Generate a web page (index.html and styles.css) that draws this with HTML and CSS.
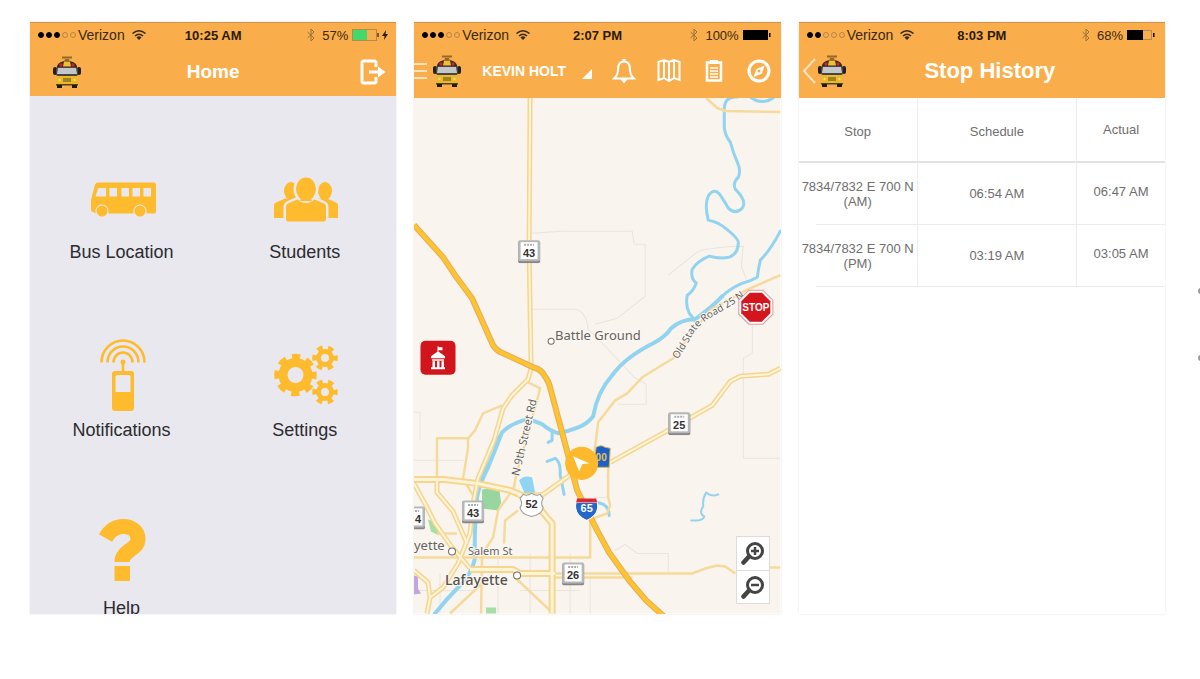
FILE: index.html
```html
<!DOCTYPE html>
<html lang="en">
<head>
<meta charset="utf-8">
<meta name="viewport" content="width=device-width, initial-scale=1">
<title>School Bus Tracker</title>
<link rel="stylesheet" href="styles.css">
</head>
<body>
<svg class="sprite" aria-hidden="true">
  <symbol id="bus-logo" viewBox="0 0 30 34">
    <path d="M10 1.500h10v2H10zM13 4h4l1 3h-6z" fill="#96672a"/>
    <path d="M5 11Q7 6 15 6t10 5v3H5z" fill="#3b2c22"/>
    <path d="M12 6.500h6l1 5h-8z" fill="#efc02f"/>
    <circle cx="9" cy="10" r="1.700" fill="#d3202a"/><circle cx="21" cy="10" r="1.700" fill="#d3202a"/>
    <rect x="1" y="12" width="4" height="8" rx="2" fill="#25201d"/><rect x="25" y="12" width="4" height="8" rx="2" fill="#25201d"/>
    <rect x="4" y="12" width="22" height="9" rx="2" fill="#4a4540"/>
    <path d="M6 13h18l1 6H5z" fill="#c3c7cc"/>
    <path d="M5 21h20l1 9H4z" fill="#e9b92b"/>
    <path d="M11 24h8M11 26h8" stroke="#5c4719" stroke-width="1"/>
    <circle cx="7.500" cy="25" r="1.200" fill="#f6da6c"/><circle cx="22.500" cy="25" r="1.200" fill="#f6da6c"/>
    <path d="M4 29h22v1.500H4z" fill="#54421e"/>
    <path d="M5 30h5v3H5zM20 30h5v3h-5z" fill="#1e1a18"/>
  </symbol>
  <symbol id="wifi" viewBox="0 0 16 12">
    <path d="M1.500 4.500Q8-1 14.500 4.500M4 7Q8 3.500 12 7" fill="none" stroke="#3a2812" stroke-width="1.600"/>
    <path d="M5.500 8.500Q8 6 10.500 8.500L8 11z" fill="#3a2812"/>
  </symbol>
  <symbol id="bluetooth" viewBox="0 0 10 14">
    <path d="M1.500 4 8 10 5 13V1l3 3-6.500 6" fill="none" stroke="#97703e" stroke-width="1"/>
  </symbol>
  <symbol id="route-sign" viewBox="0 0 24 24">
    <rect x="1" y="2" width="22" height="22" rx="2" fill="#858585"/>
    <rect x="1" y="1" width="22" height="21" rx="2" fill="#b5b7b8"/>
    <rect x="3.500" y="3" width="17" height="17" fill="#fff"/>
    <path d="M7 5.500h10" stroke="#aaa" stroke-width="2" stroke-dasharray="2 1"/>
  </symbol>
</svg>

<main class="screens">
  <section class="phone home" aria-label="Home">
    <header class="bar">
      <div class="status">
        <span class="carrier"><span class="signal"><i class="on"></i><i class="on"></i><i class="on"></i><i></i><i></i></span>Verizon<svg class="wifi"><use href="#wifi"/></svg></span>
        <b>10:25 AM</b>
        <span class="power"><svg class="bt"><use href="#bluetooth"/></svg>57%<svg class="battery" viewBox="0 0 30 12"><rect x=".5" y=".5" width="24" height="11" fill="none" stroke="#b58a4d"/><rect x="1" y="1" width="14" height="10" fill="#44d86b"/><path d="M26 4v4" stroke="#7a5a2c" stroke-width="2"/></svg><svg class="bolt" viewBox="0 0 6 12"><path d="M4 1 0 7h2.500L2 11l4-6H3.500z" fill="#2a1b08"/></svg></span>
      </div>
      <div class="title-row">
        <svg class="logo"><use href="#bus-logo"/></svg>
        <h1>Home</h1>
        <button class="icon-btn exit" aria-label="Log out"><svg viewBox="0 0 26 26"><path d="M16 8V4a2 2 0 0 0-2-2H4a2 2 0 0 0-2 2v18a2 2 0 0 0 2 2h10a2 2 0 0 0 2-2v-4" fill="none" stroke="#fff" stroke-width="3"/><path d="M9 11.500h9V7.500l7.500 5.500-7.500 5.500v-4H9z" fill="#fff"/></svg></button>
      </div>
    </header>
    <nav class="tiles">
      <a class="tile" href="#bus">
        <svg viewBox="79 156 84 84"><path fill="#fdbb2d" fill-rule="evenodd" d="M97 182.500h56q2 0 2 2v27q0 2-2 2h-7.500a6.500 6.500 0 0 0-13 0h-25a6.500 6.500 0 0 0-13 0l-2-1.500q-2.500 0-2.500-2v-10l4-15.500q1-2 3-2zm0 6-2.500 8h10.500v-8.500h-6q-1.500 0-2 .5zm11.500-.5v8.500h7.500V188zm12 0v8.500h7.500V188zm11 0v8.500h7.500V188zm11 0v8.500h7.500V188z"/><circle cx="101" cy="211" r="5.500" fill="#fdbb2d" stroke="#e9e8ef" stroke-width="2" paint-order="stroke"/><circle cx="139" cy="211" r="5.500" fill="#fdbb2d" stroke="#e9e8ef" stroke-width="2" paint-order="stroke"/></svg>
        <span>Bus Location</span>
      </a>
      <a class="tile" href="#students">
        <svg viewBox="262 156 84 84"><g fill="#fdbb2d"><ellipse cx="290" cy="191" rx="7" ry="9"/><ellipse cx="324" cy="191" rx="7" ry="9"/><path d="M273 218v-13q0-2 2-2.500l9-4h11v19.500zM337 218v-13q0-2-2-2.500l-9-4h-11v19.500z"/></g><g fill="#fdbb2d" stroke="#e9e8ef" stroke-width="5" paint-order="stroke"><path d="M285 219v-12q0-3 3-4l12-5 1-4h8l1 4 12 5q3 1 3 4v12q0 2.500-2.500 2.500h-35q-2.500 0-2.500-2.500z"/><ellipse cx="305" cy="189" rx="10" ry="11.500"/></g><path d="M301 196h8l2 5h-12z" fill="#fdbb2d"/></svg>
        <span>Students</span>
      </a>
      <a class="tile" href="#notifications">
        <svg viewBox="79 334 84 84"><g fill="none" stroke="#fdbb2d" stroke-width="2.600"><path d="M100.500 362.500a21.500 22 0 0 1 43 0M106.500 362.500a15.500 16 0 0 1 31 0M112.500 362.500a9.500 10 0 0 1 19 0M122 362v12"/></g><circle cx="122" cy="362" r="2.500" fill="#fdbb2d"/><path d="M114 371h16q3 0 3 3v34q0 3-3 3h-16q-3 0-3-3v-34q0-3 3-3zm2 4q-1.500 0-1.500 1.500V392h15v-15.500q0-1.500-1.500-1.500z" fill="#fdbb2d" fill-rule="evenodd"/></svg>
        <span>Notifications</span>
      </a>
      <a class="tile" href="#settings">
        <svg viewBox="262 334 84 84"><g fill="none" stroke="#fdbb2d">
          <circle cx="294.500" cy="375" r="12.500" stroke-width="9"/><circle cx="294.500" cy="375" r="18.700" stroke-width="5" stroke-dasharray="8.344 6.344" stroke-dashoffset="4.172"/>
          <circle cx="324" cy="358" r="6.500" stroke-width="5"/><circle cx="324" cy="358" r="10.500" stroke-width="4.500" stroke-dasharray="5.498 5.498" stroke-dashoffset="2.749"/>
          <circle cx="324" cy="392" r="6.500" stroke-width="5"/><circle cx="324" cy="392" r="10.500" stroke-width="4.500" stroke-dasharray="5.498 5.498" stroke-dashoffset="2.749"/>
        </g></svg>
        <span>Settings</span>
      </a>
      <a class="tile" href="#help">
        <svg viewBox="79 512 84 84"><path d="M104.500 538Q111 526.500 122 526.500c9 0 15 5 15 12.500 0 11-16 11-16 23" fill="none" stroke="#fdbb2d" stroke-width="15"/><path d="M113.500 566h15.500v15h-15.500z" fill="#fdbb2d"/></svg>
        <span>Help</span>
      </a>
    </nav>
  </section>

  <section class="phone" aria-label="Map">
    <header class="bar tall">
      <div class="status">
        <span class="carrier"><span class="signal"><i class="on"></i><i class="on"></i><i class="on"></i><i></i><i></i></span>Verizon<svg class="wifi"><use href="#wifi"/></svg></span>
        <b>2:07 PM</b>
        <span class="power"><svg class="bt"><use href="#bluetooth"/></svg>100%<svg class="battery" viewBox="0 0 30 12"><path d="M0 1h25v10H0zM26 4h1.500v4H26z"/></svg></span>
      </div>
      <div class="title-row map-tools">
        <button class="menu" aria-label="Menu"><svg viewBox="0 0 13 18"><path d="M0 2h13M0 9h13M0 16h13" stroke="#fde3c2" stroke-width="2"/></svg></button>
        <svg class="logo"><use href="#bus-logo"/></svg>
        <label class="student"><select aria-label="Student"><option>KEVIN HOLT</option></select><svg viewBox="0 0 10 10"><path d="M10 0v10H0z" fill="#fff"/></svg></label>
        <div class="tools">
          <button class="icon-btn" aria-label="Alerts"><svg viewBox="0 0 24 26"><path d="M12 3.500c-5 0-6 4-6 8 0 5-1.500 7-4 9h20c-2.500-2-4-4-4-9 0-4-1-8-6-8z" fill="none" stroke="#fff" stroke-width="2"/><path d="M8.500 21h7L12 25.500zM10.500 1h3v3h-3z" fill="#fff"/></svg></button>
          <button class="icon-btn" aria-label="Map view"><svg viewBox="0 0 24 26"><path d="m1.500 4 5.500-2 5 2 5-2 5.500 2v18L17 20l-5 3-5-3-5.500 2zM7 2v18M12 4v19M17 2v18" fill="none" stroke="#fff" stroke-width="2"/></svg></button>
          <button class="icon-btn" aria-label="Stop history"><svg viewBox="0 0 24 26"><path d="M5 4.500h14v18H5z" fill="none" stroke="#fff" stroke-width="2.500"/><path d="M8 2h8v4H8z" fill="#fff"/><path d="M8 10h8M8 13h8M8 16h8M8 19h8" stroke="#fff" stroke-width="1.300"/></svg></button>
          <button class="icon-btn" aria-label="Compass"><svg viewBox="0 0 24 26"><circle cx="12" cy="13" r="10" fill="none" stroke="#fff" stroke-width="3"/><path d="m17.500 7.500-2.500 8-8.500 3.500 3-8z" fill="#fff"/><circle cx="12" cy="13" r="1.500" fill="#f9ae4b"/></svg></button>
        </div>
      </div>
    </header>
    <div class="map">
      <svg class="map-canvas" viewBox="414 98 366 515" preserveAspectRatio="xMidYMid slice" role="img" aria-label="Map of Lafayette">
        <rect x="414" y="98" width="366" height="515" fill="#f9f4ee"/>
        <g fill="none" stroke="#e8e4de">
          <path d="M532 233l30-2h70l2 13h11v52l-28 22-22 6M668 275l30-24q20-5 45-5l-2 20 5 13M532 309h42q12 1 14 20l20 20 26 28 12 7v20h-28M752 325v28l-9 5v100h37M414 412h6v28M743 450v8h37M615 550l10-6 12 9h31v20M595 497h13M414 460h50M414 590h60M498 553v60M530 553v60M570 553v60M440 573v40M520 590h60M590 573v40"/>
        </g>
        <path d="M482 489l17-2 2 15-3 8-16-2z" fill="#98d6a0"/><path d="M428 519l7 2 4 14-8-4zM486 607h10v6h-10z" fill="#a6dfa5"/><path d="M414 575l4 1v12l3 5-7 1z" fill="#c4a5dc"/>
        <path d="M519 480q5-6 13-3l3 15-10 2z" fill="#8fd4f1"/>
        <g fill="none" stroke="#92d4f0" stroke-linejoin="round" stroke-linecap="round">
          <path stroke-width="3" d="M737 97q-12-1-13 11v20q1 8 6 14 3 11 7 20 4 9 1 15-6 6-3 12 12 12 7 19-7 7-14 0-4-7-8-13-6-8-12 1-4 8 0 24 10 2 17 8 14 11 13 15 0 10-9 14-9 2-20-1-12 5-17 13-2 9 4 14-3 8-9 12-2 10 2 18l7 9M750 97q12 9 24 0M780 231q-10 19-20 29-2 9-3 17-7 4-15 6-13 6-20 13"/>
          <path stroke-width="4" d="M722 296q-9 10-27 23-14 0-24 9-6 9-18 15-28 14-41 32-15 17-19 41-6 8-15 11-10 4-20 6-9-3-16-9-9-5-19-4-13 4-21 12-9 23-14 35-9 18-11 30-3 35-2 61-3 15-16 28-12 12-24 27"/>
          <path stroke-width="3" d="M501 434l-10 14-11 34M552 430v10l-4 2M547 461l8-3q6 4 5 16l4 20M594 502q15 0 15 13"/>
          <path stroke-width="2" d="M718 494q-6 3-12-2-4 6-3 14-5 7 1 10-1 5-13 4"/>
        </g>
        <g fill="none" stroke="#f6da9b" stroke-width="2.500" stroke-linejoin="round">
          <path d="M706 98l11 10 8 3 55 1M780 275l-32 14-38 21-18 22-19 26-31 19-15 16-12 7-17 22-4 32M437 478v-40h31l7-8 8-17 19-8M468 438v10l-5 30 10 17M414 557h176V514M510 493l-12 17-5 27-11 17-1 59M518 510l-13 10-1 23M515 577l37 35M482 583l-32 30M528 382l12 6-3 12-21 75-3 17M608 467v30l2 8-3 8-14 5M550 573h142l13-5 12-3 8 1 10 7M550 577h82M768 567h12M437 533h20"/>
        </g>
        <g id="major" fill="none" stroke-linejoin="round">
          <g stroke="#f5d590" stroke-width="5"><path d="M530 98l-1 150 2 120-3 11-16 16-9 13-9 32-16 38-5 25-3 30-12 30-15 24-13 10-3 16M414 483l13 24 8 16 17 24 18 21M437 480v12l16 19 14 32M780 368l-12 6-28 2-10 5-18 24-37 21-65 36M518 495l25-1 28-20M414 570l14 12 2 15"/><path stroke-width="7" d="M414 479h29l34 4 33 7 12 5 20 16 10 12v90M470 569h43l7 4h35"/></g>
          <g stroke="#fff5d6" stroke-width="2"><path d="M530 98l-1 150 2 120-3 11-16 16-9 13-9 32-16 38-5 25-3 30-12 30-15 24-13 10-3 16M414 483l13 24 8 16 17 24 18 21M437 480v12l16 19 14 32M780 368l-12 6-28 2-10 5-18 24-37 21-65 36M518 495l25-1 28-20M414 570l14 12 2 15"/><path stroke-width="3" d="M414 479h29l34 4 33 7 12 5 20 16 10 12v90M470 569h43l7 4h35"/></g>
          <path d="M414 225l29 32 12 18 17 23 21 47q4 6 10 8l30 14q8 2 11 8 5 6 7 16l16 60 10 39 20 40 12 22 20 28 17 20 19 17" stroke="#e9a966" stroke-width="6"/>
          <path d="M414 225l29 32 12 18 17 23 21 47q4 6 10 8l30 14q8 2 11 8 5 6 7 16l16 60 10 39 20 40 12 22 20 28 17 20 19 17" stroke="#fcc52c" stroke-width="4"/>
        </g>
        <g class="map-text">
          <circle cx="551" cy="341" r="3" class="town"/><text x="555" y="340">Battle Ground</text>
          <text x="414" y="550">yette</text><circle cx="452" cy="551" r="3.500" class="town"/>
          <text x="445" y="585" class="city">Lafayette</text><circle cx="517" cy="575" r="3.500" class="town"/>
          <text x="468" y="555" class="street">Salem St</text>
          <text class="street" transform="translate(519 476) rotate(-77)">N 9th Street Rd</text>
          <path id="old-road" d="M677 359q8-10 15-24 7-12 24-21 17-9 31-20l30-18" fill="none"/>
          <text class="street small"><textPath href="#old-road">Old State Road 25 N</textPath></text>
        </g>
        <g class="sign">
          <use href="#route-sign" x="517" y="239" width="24" height="24"/><text x="529" y="257">43</text>
          <use href="#route-sign" x="461" y="499" width="24" height="24"/><text x="473" y="517">43</text>
          <use href="#route-sign" x="667" y="411" width="24" height="24"/><text x="679" y="429">25</text>
          <use href="#route-sign" x="561" y="561" width="24" height="24"/><text x="573" y="579">26</text>
          <use href="#route-sign" x="402" y="505" width="24" height="24"/><text x="418" y="523">4</text>
          <path d="M523 494q4 2 8.500-1 4.500 3 8.500 1l3 4q-3 5 0 9-1 7-11.500 9-10.500-2-11.500-9 3-4 0-9z" fill="#fff" stroke="#999"/><text x="531.500" y="508">52</text>
        </g>
        <path d="M596 447q5-3 9 0l5 1-1 19h-16z" fill="#1d5fc4" stroke="#c8b654"/><text class="shield-text gold" x="601" y="461">00</text>
        <path d="M576 502h21q3 12-10.500 18Q573 514 576 502z" fill="#2566c9" stroke="#fff"/><path d="M577 498h19l1 4h-21z" fill="#d82735"/><text class="shield-text" x="586.500" y="512">65</text>
        <circle cx="581.500" cy="463" r="16.500" fill="#fdb82b"/><path d="M573 456l16 7-7 1-3 7z" fill="#fff"/>
        <rect x="420.500" y="340.500" width="35" height="34" rx="5" fill="#d2151c"/>
        <g fill="#fff"><path d="M437.500 346v7h1v-3h4v-3h-4v-1zM438 351l-7 5v2h14v-2zM432 359h12v1.500h-12zM432.500 361h2.500v6h-2.500zM437 361h2.500v6H437zM441.500 361h2.500v6h-2.500zM431 367h14v2h-14z"/></g>
        <path d="M748.500 290h14l10 10v14l-10 10h-14l-10-10v-14z" fill="#fff" stroke="#e39a9a"/><path d="M749.500 292.500h12l8.500 8.500v12l-8.500 8.500h-12L741 313v-12z" fill="#d4151c"/><text class="stop-text" x="755.500" y="311">STOP</text>
      </svg>
      <div class="zoom">
        <button aria-label="Zoom in"><svg viewBox="0 0 24 24"><circle cx="14" cy="10" r="7.500" fill="none" stroke="#444" stroke-width="3"/><path d="M8 15.500 2.500 21.500" stroke="#444" stroke-width="4.500" stroke-linecap="round"/><path d="M10 10h8M14 6v8" stroke="#444" stroke-width="2.500"/></svg></button>
        <button aria-label="Zoom out"><svg viewBox="0 0 24 24"><circle cx="14" cy="10" r="7.500" fill="none" stroke="#444" stroke-width="3"/><path d="M8 15.500 2.500 21.500" stroke="#444" stroke-width="4.500" stroke-linecap="round"/><path d="M10 10h8" stroke="#444" stroke-width="2.500"/></svg></button>
      </div>
    </div>
  </section>

  <section class="phone" aria-label="Stop History">
    <header class="bar tall">
      <div class="status">
        <span class="carrier"><span class="signal"><i class="on"></i><i class="on"></i><i></i><i></i><i></i></span>Verizon<svg class="wifi"><use href="#wifi"/></svg></span>
        <b>8:03 PM</b>
        <span class="power"><svg class="bt"><use href="#bluetooth"/></svg>68%<svg class="battery" viewBox="0 0 30 12"><rect x=".5" y="1.500" width="24" height="9" fill="none" stroke="#b58a4d"/><path d="M0 1h16v10H0zM26 4h1.500v4H26z"/></svg></span>
      </div>
      <div class="title-row history-row">
        <button class="back" aria-label="Back"><svg viewBox="0 0 16 28"><path d="M14 2 3 14l11 12" fill="none" stroke="#fde3c2" stroke-width="2"/></svg></button>
        <svg class="logo"><use href="#bus-logo"/></svg>
        <h1>Stop History</h1>
      </div>
    </header>
    <table class="history">
      <thead><tr><th>Stop</th><th>Schedule</th><th>Actual</th></tr></thead>
      <tbody>
        <tr><td>7834/7832 E 700 N<br>(AM)</td><td>06:54 AM</td><td>06:47 AM</td></tr>
        <tr><td>7834/7832 E 700 N<br>(PM)</td><td>03:19 AM</td><td>03:05 AM</td></tr>
      </tbody>
    </table>
  </section>
</main>
<div class="edge-dots" aria-hidden="true"><i></i><i></i></div>
</body>
</html>
```

FILE: styles.css
```css
* { box-sizing: border-box; }
body {
  margin: 0;
  background: #fff;
  color: #2b2b2e;
  font-family: "Liberation Sans", Arial, sans-serif;
  overflow-x: hidden;
}
button { padding: 0; border: 0; background: none; font: inherit; cursor: pointer; }
svg { display: block; flex: none; }
.sprite { position: absolute; width: 0; height: 0; }

.screens {
  display: grid;
  grid-template-columns: repeat(3, minmax(0, 1fr));
  gap: 18px;
  padding: 22px 35px 64px 30px;
}
.phone {
  display: flex;
  flex-direction: column;
  aspect-ratio: 366 / 591;
  min-height: 0;
  overflow: hidden;
  box-shadow: 0 0 2px #e2e2e6;
}

/* Header bars */
.bar {
  flex: none;
  background: #f9ae4b;
  border-top: 1px solid #cf934b;
}
.status {
  display: grid;
  grid-template-columns: 1fr auto 1fr;
  align-items: center;
  height: 24px;
  padding: 0 8px;
  color: #3a2812;
  font-size: 13px;
}
.status b { color: #2a1b08; }
.carrier, .power { display: flex; align-items: center; }
.carrier { font-size: 14px; }
.power { justify-content: flex-end; }
.signal { display: flex; gap: 2px; margin-right: 2px; }
.signal i { width: 6px; height: 6px; border: 1px solid #b58445; border-radius: 50%; }
.signal .on { border-color: #000; background: #000; }
.wifi { width: 16px; height: 12px; margin-left: 6px; }
.bt { width: 10px; height: 14px; margin-right: 6px; }
.battery { width: 30px; height: 12px; margin-left: 4px; }
.bolt { width: 6px; height: 12px; }

.title-row {
  display: grid;
  grid-template-columns: 1fr auto 1fr;
  align-items: center;
  height: 49px;
  padding: 0 10px;
}
.home .logo { margin-left: 12px; }
.tall .title-row { height: 51px; padding-bottom: 3px; }
.title-row h1 { margin: 0; color: #fff; font-size: 19px; line-height: 24px; }
.logo { width: 30px; height: 34px; }
.icon-btn { width: 24px; height: 26px; }
.icon-btn svg { width: 100%; height: 100%; }
.exit { width: 26px; justify-self: end; }
.title-row.map-tools { display: flex; padding-left: 0; }
.menu { width: 13px; margin-right: 5px; }
.student { display: flex; align-items: center; flex: 1; margin-left: 20px; }
.student select {
  appearance: none;
  margin: 0;
  padding: 0;
  width: 100px;
  border: 0;
  background: none;
  color: #fff;
  font: bold 14px "Liberation Sans", Arial, sans-serif;
}
.student svg { width: 10px; height: 10px; margin-top: 6px; }
.tools { display: flex; gap: 21px; }
.title-row.history-row { display: flex; padding: 0 16px 3px 2px; }
.back { width: 16px; height: 28px; }
.history-row h1 { flex: 1; padding-right: 16px; font-size: 22px; text-align: center; }

/* Home tiles */
.home { background: #e9e8ef; }
.tiles { display: grid; grid-template-columns: 1fr 1fr; grid-auto-rows: 178px; }
.tile {
  display: flex;
  flex-direction: column;
  align-items: center;
  padding-top: 60px;
  color: #2b2b2e;
  font-size: 18px;
  line-height: 24px;
  text-decoration: none;
}
.tile svg { width: 84px; height: 84px; }

/* Map */
.map { position: relative; flex: 1; min-height: 0; overflow: hidden; }
.map-canvas { width: 100%; height: 100%; }
.map-text {
  fill: #66625e;
  font: 13px "Noto Sans", sans-serif;
}
.map-text text { stroke: #fbf8f3; stroke-width: 2px; paint-order: stroke; }
.map-text .city { font-weight: 500; font-size: 14px; fill: #55514e; }
.map-text .street { font-size: 11px; }
.map-text .small { font-size: 10px; }
.town { fill: #fff; stroke: #6f6b67; stroke-width: 1px; }
.sign text, .shield-text, .stop-text {
  font: bold 11px "Liberation Sans", Arial, sans-serif;
  text-anchor: middle;
  fill: #333;
}
.shield-text { fill: #fff; }
.shield-text.gold { fill: #e6c84a; font-size: 10px; }
.stop-text { fill: #fff; font-size: 10px; }
.zoom {
  position: absolute;
  right: 11px;
  bottom: 10px;
  display: grid;
  width: 34px;
  background: #fff;
  border: 1px solid #dedbd8;
}
.zoom button { display: grid; place-items: center; height: 33px; }
.zoom button + button { border-top: 1px solid #dedbd8; }
.zoom svg { width: 24px; height: 24px; }

/* Stop history */
.history {
  width: 100%;
  table-layout: fixed;
  border-collapse: separate;
  border-spacing: 0;
  color: #6e6e6e;
  font-size: 13px;
  line-height: 15px;
  text-align: center;
}
.history th { height: 65px; padding: 4px 0 0; border-bottom: 2px solid #e2e2e2; font-weight: normal; }
.history td { height: 62px; padding: 0; border-bottom: 1px solid #ececec; white-space: nowrap; }
.history th:nth-child(1) { width: 119px; }
.history th:nth-child(3) { width: 24%; padding: 0; }
.history th:nth-child(-n+2), .history td:nth-child(-n+2) { border-right: 1px solid #ececec; }
.history td:nth-child(3) { padding-bottom: 4px; }
.history td:first-child {
  border-bottom: 0;
  background: linear-gradient(#ececec, #ececec) 17px 100% / 100% 1px no-repeat;
}

/* Marks that run off the right side of the page */
.edge-dots { position: absolute; top: 288px; right: 0; width: 2px; display: grid; gap: 61px; overflow: hidden; }
.edge-dots i { width: 6px; height: 6px; border-radius: 50%; background: #999; }
```
